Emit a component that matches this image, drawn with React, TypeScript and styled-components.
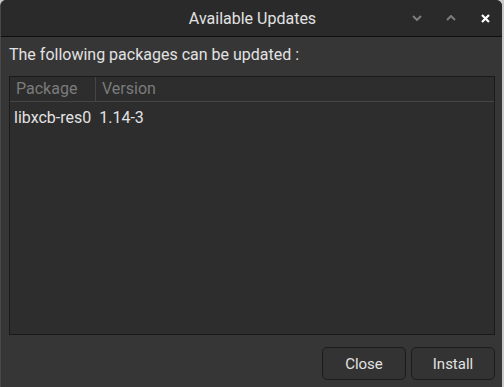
import React from "react";
import styled, { createGlobalStyle } from "styled-components";

const GlobalStyle = createGlobalStyle`
  html, body {
    margin: 0;
    padding: 0;
    background: #c9c9c9;
    font-family: Roboto, "Noto Sans", sans-serif;
  }
`;

const packages = [{ name: "libxcb-res0", version: "1.14-3" }];

export default function App() {
  return (
    <>
      <GlobalStyle />
      <Desktop>
        <Window>
          <TitleBar>
            <Title>Available Updates</Title>
            <Controls>
              <CtrlButton aria-label="minimise">
                <svg width="10" height="6" viewBox="0 0 10 6">
                  <path d="M1 1 L5 5 L9 1" stroke="#7d7d7d" strokeWidth="2" fill="none" />
                </svg>
              </CtrlButton>
              <CtrlButton aria-label="maximise">
                <svg width="10" height="6" viewBox="0 0 10 6">
                  <path d="M1 5 L5 1 L9 5" stroke="#7d7d7d" strokeWidth="2" fill="none" />
                </svg>
              </CtrlButton>
              <CtrlButton aria-label="close">
                <svg width="9" height="9" viewBox="0 0 9 9">
                  <path d="M1 1 L8 8 M8 1 L1 8" stroke="#ffffff" strokeWidth="2.2" fill="none" />
                </svg>
              </CtrlButton>
            </Controls>
          </TitleBar>
          <Body>
            <Intro>The following packages can be updated :</Intro>
            <Table>
              <HeaderRow>
                <HeaderCell>Package</HeaderCell>
                <HeaderCell>Version</HeaderCell>
              </HeaderRow>
              {packages.map((p) => (
                <Row key={p.name}>
                  <Cell>{p.name}</Cell>
                  <Cell>{p.version}</Cell>
                </Row>
              ))}
            </Table>
            <Buttons>
              <Button>Close</Button>
              <Button>Install</Button>
            </Buttons>
          </Body>
        </Window>
      </Desktop>
    </>
  );
}

const Desktop = styled.div`
  width: 504px;
  height: 387px;
  display: flex;
  background: #c9c9c9;
`;

const Window = styled.div`
  width: 502px;
  height: 387px;
  flex-shrink: 0;
  box-sizing: border-box;
  display: flex;
  flex-direction: column;
  background: #363636;
  border-left: 1px solid #484848;
  border-radius: 6px 6px 0 0;
  overflow: hidden;
`;

const TitleBar = styled.div`
  height: 36px;
  flex-shrink: 0;
  display: grid;
  grid-template-columns: 1fr auto 1fr;
  align-items: center;
  background: #2a2a2a;
  border-bottom: 1px solid #0e0e0e;
`;

const Title = styled.div`
  grid-column: 2;
  color: #e2e2e2;
  font-size: 16px;
  padding-left: 2px;
`;

const Controls = styled.div`
  grid-column: 3;
  justify-self: end;
  display: flex;
  align-items: center;
  gap: 14px;
  padding-right: 7px;
`;

const CtrlButton = styled.div`
  width: 20px;
  height: 20px;
  display: flex;
  align-items: center;
  justify-content: center;
`;

const Body = styled.div`
  flex: 1;
  display: flex;
  flex-direction: column;
  padding: 8px 7px 7px 8px;
`;

const Intro = styled.div`
  color: #e2e2e2;
  font-size: 16px;
  height: 20px;
  line-height: 20px;
  margin-bottom: 11px;
`;

const Table = styled.div`
  flex: 1;
  display: flex;
  flex-direction: column;
  background: #2d2d2d;
  border: 1px solid #1a1a1a;
`;

const HeaderRow = styled.div`
  display: grid;
  grid-template-columns: 85px 1fr;
  height: 24px;
  border-bottom: 1px solid #454545;
`;

const HeaderCell = styled.div`
  color: #7b7b7b;
  font-size: 16px;
  line-height: 24px;
  padding-left: 6px;
  & + & {
    border-left: 1px solid #454545;
  }
`;

const Row = styled.div`
  display: flex;
  height: 30px;
  align-items: center;
  gap: 8px;
  padding-left: 4px;
`;

const Cell = styled.div`
  color: #e2e2e2;
  font-size: 16px;
`;

const Buttons = styled.div`
  display: flex;
  justify-content: flex-end;
  gap: 5px;
  margin-top: 12px;
`;

const Button = styled.div`
  width: 82px;
  height: 31px;
  display: flex;
  align-items: center;
  justify-content: center;
  background: #333333;
  border: 1px solid #1c1c1c;
  border-radius: 5px;
  color: #e2e2e2;
  font-size: 15px;
`;
